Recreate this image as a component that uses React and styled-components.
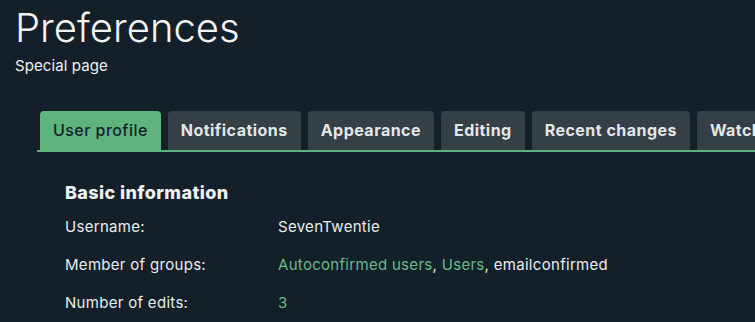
import React from "react";
import styled, { createGlobalStyle } from "styled-components";

const Global = createGlobalStyle`
    body {
        margin: 0;
        background: #13202a;
        font-family: Inter, "Noto Sans", sans-serif;
        color: #e8ecee;
    }
`;

const Page = styled.div`
    padding: 4px 15px 0 15px;
    overflow: hidden;
    height: 322px;
    box-sizing: border-box;
`;

const Title = styled.h1`
    margin: 0;
    font-size: 40px;
    font-weight: 300;
    line-height: 48px;
    color: #f1f3f4;
`;

const Subtitle = styled.div`
    font-size: 15px;
    margin-top: 4px;
    letter-spacing: 0.1px;
    color: #eef1f2;
`;

const TabBar = styled.div`
    display: flex;
    gap: 7px;
    margin: 36px 0 0 22px;
    padding-left: 3px;
    border-bottom: 2px solid #5cb37b;
    white-space: nowrap;
    width: 800px;
`;

const Tab = styled.div`
    padding: 0 13px;
    height: 39px;
    line-height: 38px;
    font-size: 16px;
    letter-spacing: ${p => (p.active ? "0.45px" : "0.47px")};
    font-weight: ${p => (p.active ? 500 : 700)};
    border-radius: 4px 4px 0 0;
    background: ${p => (p.active ? "#5fb47e" : "#343f46")};
    color: ${p => (p.active ? "#14212a" : "#e3e7e9")};
`;

const Section = styled.div`
    padding: 30px 0 0 50px;
`;

const Heading = styled.h2`
    margin: 0 0 12px;
    font-size: 18px;
    font-weight: 800;
    letter-spacing: 0.4px;
    color: #eef1f2;
`;

const Row = styled.div`
    display: grid;
    grid-template-columns: 213px 1fr;
    font-size: 15px;
    letter-spacing: 0.3px;
    height: 38px;
    line-height: 24px;
`;

const Link = styled.span`
    color: #6ab98a;
`;

const tabs = ["User profile", "Notifications", "Appearance", "Editing", "Recent changes", "Watchlist"];

export default function App() {
    return (
        <Page>
            <Global />
            <Title>Preferences</Title>
            <Subtitle>Special page</Subtitle>
            <TabBar>
                {tabs.map((t, i) => (
                    <Tab key={t} active={i === 0}>{t}</Tab>
                ))}
            </TabBar>
            <Section>
                <Heading>Basic information</Heading>
                <Row>
                    <span>Username:</span>
                    <span>SevenTwentie</span>
                </Row>
                <Row>
                    <span>Member of groups:</span>
                    <span>
                        <Link>Autoconfirmed users</Link>, <Link>Users</Link>, emailconfirmed
                    </span>
                </Row>
                <Row>
                    <span>Number of edits:</span>
                    <Link>3</Link>
                </Row>
            </Section>
        </Page>
    );
}
